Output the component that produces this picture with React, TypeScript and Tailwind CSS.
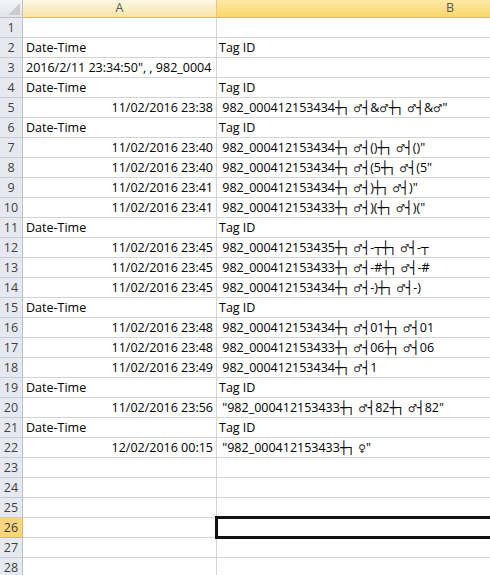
import React from "react";

type Row = { a?: string; aAlign?: "left" | "right"; b?: string };

const rows: Row[] = [
  {},
  { a: "Date-Time", b: "Tag ID" },
  { a: "2016/2/11 23:34:50\", , 982_0004" },
  { a: "Date-Time", b: "Tag ID" },
  { a: "11/02/2016 23:38", aAlign: "right", b: " 982_000412153434┼┐ ♂┤&♂┼┐ ♂┤&♂\"" },
  { a: "Date-Time", b: "Tag ID" },
  { a: "11/02/2016 23:40", aAlign: "right", b: " 982_000412153434┼┐ ♂┤()┼┐ ♂┤()\"" },
  { a: "11/02/2016 23:40", aAlign: "right", b: " 982_000412153434┼┐ ♂┤(5┼┐ ♂┤(5\"" },
  { a: "11/02/2016 23:41", aAlign: "right", b: " 982_000412153434┼┐ ♂┤)┼┐ ♂┤)\"" },
  { a: "11/02/2016 23:41", aAlign: "right", b: " 982_000412153433┼┐ ♂┤)(┼┐ ♂┤)(\"" },
  { a: "Date-Time", b: "Tag ID" },
  { a: "11/02/2016 23:45", aAlign: "right", b: " 982_000412153435┼┐ ♂┤-┬┼┐ ♂┤-┬" },
  { a: "11/02/2016 23:45", aAlign: "right", b: " 982_000412153433┼┐ ♂┤-#┼┐ ♂┤-#" },
  { a: "11/02/2016 23:45", aAlign: "right", b: " 982_000412153434┼┐ ♂┤-)┼┐ ♂┤-)" },
  { a: "Date-Time", b: "Tag ID" },
  { a: "11/02/2016 23:48", aAlign: "right", b: " 982_000412153434┼┐ ♂┤01┼┐ ♂┤01" },
  { a: "11/02/2016 23:48", aAlign: "right", b: " 982_000412153433┼┐ ♂┤06┼┐ ♂┤06" },
  { a: "11/02/2016 23:49", aAlign: "right", b: " 982_000412153434┼┐ ♂┤1" },
  { a: "Date-Time", b: "Tag ID" },
  { a: "11/02/2016 23:56", aAlign: "right", b: " \"982_000412153433┼┐ ♂┤82┼┐ ♂┤82\"" },
  { a: "Date-Time", b: "Tag ID" },
  { a: "12/02/2016 00:15", aAlign: "right", b: " \"982_000412153433┼┐ ♀\"" },
  {},
  {},
  {},
  {},
  {},
  {},
];

function renderB(s: string) {
  const parts = s.split(/([♂♀])/);
  return parts.map((p, i) =>
    p === "♂" || p === "♀" ? (
      <span
        key={i}
        className="text-[10.5px] text-[#222]"
        style={{ fontFamily: '"DejaVu Sans", sans-serif' }}
      >
        {p}
      </span>
    ) : (
      <React.Fragment key={i}>{p}</React.Fragment>
    )
  );
}

export default function App() {
  return (
    <div
      className="relative w-[490px] h-[575px] overflow-hidden bg-white text-[12.5px] text-black"
      style={{ fontFamily: '"Open Sans", "DejaVu Sans", sans-serif' }}
    >
      <div className="grid grid-cols-[23px_194px_466px]">
        {/* header row */}
        <div className="relative h-[18px] border-r border-b border-[#b9c2cc] bg-gradient-to-b from-[#f3f4f6] to-[#e3e6ea]">
          <div className="absolute right-[2px] bottom-[2px] w-0 h-0 border-l-[12px] border-l-transparent border-b-[12px] border-b-[#c9cdd2]" />
        </div>
        <div className="h-[18px] border-r border-b border-r-[#e3c888] border-b-[#efb853] bg-gradient-to-b from-[#fdf8e6] to-[#f8e4a8] flex items-center justify-center text-[#5b5b5b] leading-none">
          A
        </div>
        <div className="h-[18px] border-b border-b-[#efb853] bg-gradient-to-b from-[#fdeaa6] to-[#f9d56c] flex items-center justify-center text-[#5b5b5b] leading-none">
          B
        </div>
        {rows.map((r, i) => {
          const n = i + 1;
          const sel = n === 26;
          return (
            <React.Fragment key={n}>
              <div
                className={
                  "h-[20px] border-r border-b flex items-center justify-center leading-[19px] " +
                  (sel
                    ? "bg-[#f8d67e] border-[#e4b44e] text-[#3a3a3a]"
                    : "bg-[#e6eaf0] border-b-[#c6ccd4] border-r-[#b9c2cc] text-[#3f3f3f]")
                }
              >
                {n}
              </div>
              <div
                className={
                  "h-[20px] border-r border-b border-[#d4d4d4] overflow-hidden whitespace-pre leading-[19px] " +
                  (r.aAlign === "right" ? "text-right pr-[3px]" : "pl-[3px]")
                }
              >
                {r.a ?? ""}
              </div>
              <div className="h-[20px] border-b border-[#d4d4d4] overflow-hidden whitespace-pre leading-[19px] pl-[2px]">
                {r.b ? renderB(r.b) : ""}
              </div>
            </React.Fragment>
          );
        })}
      </div>
      {/* active cell B26 */}
      <div className="absolute left-[215px] top-[516px] w-[300px] h-[23px] border-[3px] border-[#111]" />
    </div>
  );
}
